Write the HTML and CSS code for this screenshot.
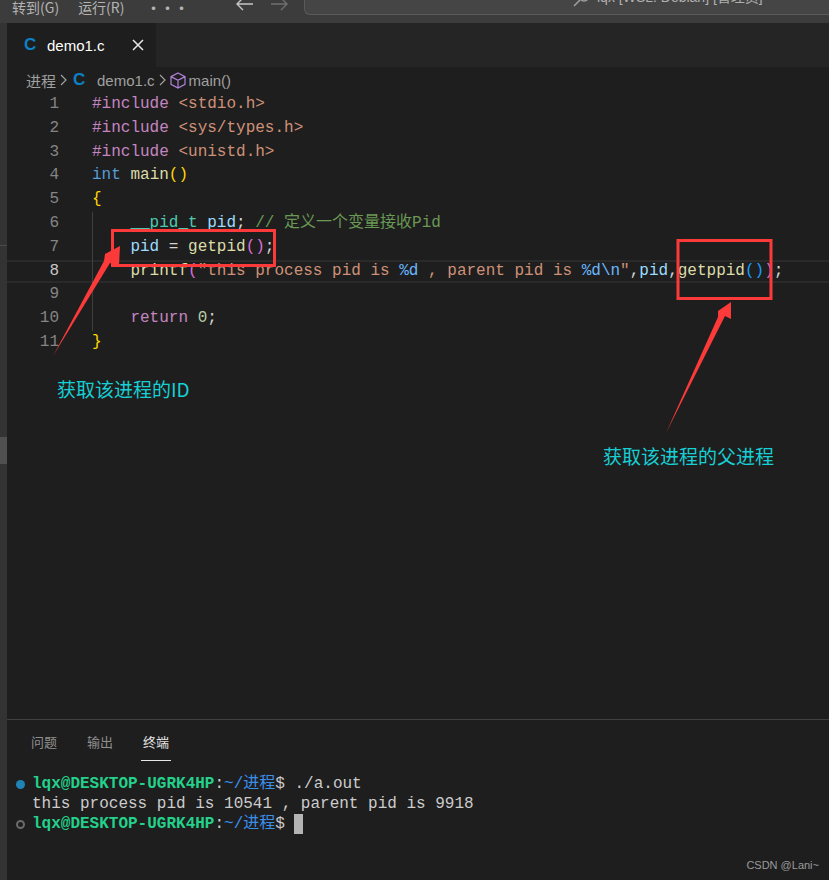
FILE: index.html
```html
<!DOCTYPE html>
<html lang="zh-CN">
<head>
    <meta charset="UTF-8">
    <title>demo1.c - 进程</title>
    <link rel="stylesheet" href="styles.css">
</head>
<body>
    <div class="window">
        <div class="titlebar">
            <div class="menu">
                <span>转到(G)</span>
                <span>运行(R)</span>
                <span class="more">···</span>
            </div>
            <div class="nav-arrows">
                <svg width="18" height="12" viewBox="0 0 18 12"><path d="M17 4H2M7 -2L1 4l6 6" fill="none" stroke="#c5c5c5" stroke-width="1.4"/></svg>
                <svg width="18" height="12" viewBox="0 0 18 12"><path d="M1 4h15M11 -2l6 6-6 6" fill="none" stroke="#6f6f6f" stroke-width="1.4"/></svg>
            </div>
            <div class="command-center">
                <svg width="20" height="12" viewBox="0 0 20 12"><path d="M1 11l6-6" stroke="#a0a0a0" stroke-width="1.5"/><circle cx="11" cy="1" r="5" fill="none" stroke="#a0a0a0" stroke-width="1.4"/></svg>
                <span>lqx [WSL: Debian] [管理员]</span>
            </div>
        </div>

        <div class="workbench">
            <div class="activity-strip">
                <div class="strip-mark"></div>
                <div class="strip-active"></div>
            </div>
            <div class="main">
                <div class="tabs">
                    <div class="tab">
                        <span class="c-icon">C</span>
                        <span class="tab-name">demo1.c</span>
                        <svg class="tab-close" width="12" height="12" viewBox="0 0 12 12"><path d="M1 1l10 10M11 1L1 11" stroke="#e8e8e8" stroke-width="1.5"/></svg>
                    </div>
                </div>

                <div class="breadcrumb">
                    <span>进程</span>
                    <svg width="8" height="12" viewBox="0 0 8 12"><path d="M1 1l5 5-5 5" fill="none" stroke="#a0a0a0" stroke-width="1.2"/></svg>
                    <span class="c-icon small">C</span>
                    <span class="crumb-file">demo1.c</span>
                    <svg width="8" height="12" viewBox="0 0 8 12"><path d="M1 1l5 5-5 5" fill="none" stroke="#a0a0a0" stroke-width="1.2"/></svg>
                    <svg class="cube" width="16" height="17" viewBox="0 0 16 17"><path d="M8 1l7 3.6v7.8L8 16l-7-3.6V4.6zM1 4.6l7 3.7 7-3.7M8 8.3V16" fill="none" stroke="#b180d7" stroke-width="1.2"/></svg>
                    <span class="crumb-file">main()</span>
                </div>

                <div class="editor">
                    <div class="line"><span class="num">1</span><span class="code"><span class="pre">#include</span> <span class="str">&lt;stdio.h&gt;</span></span></div>
                    <div class="line"><span class="num">2</span><span class="code"><span class="pre">#include</span> <span class="str">&lt;sys/types.h&gt;</span></span></div>
                    <div class="line"><span class="num">3</span><span class="code"><span class="pre">#include</span> <span class="str">&lt;unistd.h&gt;</span></span></div>
                    <div class="line"><span class="num">4</span><span class="code"><span class="kw">int</span> <span class="fn">main</span><span class="br1">()</span></span></div>
                    <div class="line"><span class="num">5</span><span class="code"><span class="br1">{</span></span></div>
                    <div class="line"><span class="num">6</span><span class="code guide">    <span class="ty">__pid_t</span> <span class="var">pid</span>; <span class="com">// 定义一个变量接收Pid</span></span></div>
                    <div class="line"><span class="num">7</span><span class="code guide">    <span class="var">pid</span> = <span class="fn">getpid</span><span class="br2">()</span>;</span></div>
                    <div class="line current"><span class="num">8</span><span class="code guide">    <span class="fn">printf</span><span class="br2">(</span><span class="str">"this process pid is </span><span class="esc">%d</span><span class="str"> , parent pid is </span><span class="esc">%d\n</span><span class="str">"</span>,<span class="var">pid</span>,<span class="fn">getppid</span><span class="br3">()</span><span class="br2">)</span>;</span></div>
                    <div class="line"><span class="num">9</span><span class="code guide"> </span></div>
                    <div class="line"><span class="num">10</span><span class="code guide">    <span class="pre">return</span> <span class="lit">0</span>;</span></div>
                    <div class="line"><span class="num">11</span><span class="code"><span class="br1">}</span></span></div>
                </div>

                <div class="panel">
                    <div class="panel-tabs">
                        <span>问题</span>
                        <span>输出</span>
                        <span class="panel-active">终端</span>
                    </div>
                    <div class="terminal">
                        <div class="term-line"><i class="dot dot-blue"></i><span class="user">lqx@DESKTOP-UGRK4HP</span>:<span class="path">~/进程</span>$ ./a.out</div>
                        <div class="term-line">this process pid is 10541 , parent pid is 9918</div>
                        <div class="term-line"><i class="dot dot-empty"></i><span class="user">lqx@DESKTOP-UGRK4HP</span>:<span class="path">~/进程</span>$ <i class="cursor"></i></div>
                    </div>
                </div>
            </div>
        </div>

        <!-- hand drawn marks on top of the screenshot -->
        <svg class="marks" width="829" height="880" viewBox="0 0 829 880">
            <rect x="112.5" y="230.5" width="162" height="35" fill="none" stroke="#fc3a3a" stroke-width="3"/>
            <rect x="678" y="240.5" width="93" height="58" fill="none" stroke="#fc3a3a" stroke-width="3"/>
            <path d="M53 356L104 261 105 254 120 246 119 266 110 263z" fill="#fc3a3a"/>
            <path d="M666 433L718 317 718 311 731 302 731 319 725 316z" fill="#fc3a3a"/>
        </svg>
        <div class="note note-left">获取该进程的ID</div>
        <div class="note note-right">获取该进程的父进程</div>
        <div class="watermark">CSDN @Lani~</div>
    </div>
</body>
</html>
```

FILE: styles.css
```css
* {
    margin: 0;
    padding: 0;
    box-sizing: border-box;
}

body {
    background: #1e1e1e;
    font-family: "Noto Sans CJK SC", "Liberation Sans", sans-serif;
    overflow: hidden;
}

.window {
    position: relative;
    width: 829px;
    height: 880px;
    display: flex;
    flex-direction: column;
    overflow: hidden;
}

/* title bar, cut off by the top of the picture */
.titlebar {
    flex: 0 0 23px;
    background: #3c3c3c;
    display: flex;
    align-items: flex-end;
    overflow: hidden;
    color: #b4b4b4;
    font-size: 14px;
    line-height: 20px;
}

.menu {
    display: flex;
    gap: 19px;
    padding-left: 12px;
    width: 236px;
    margin-bottom: 6px;
}

.more {
    margin-left: 3px;
    font-weight: bold;
}

.nav-arrows {
    display: flex;
    gap: 16px;
    width: 68px;
    height: 12px;
    margin-bottom: 11px;
}

.command-center {
    width: 525px;
    height: 39px;
    margin-bottom: 8px;
    background: #454545;
    border: 1px solid #5a5a5a;
    border-right: none;
    border-radius: 0 0 0 6px;
    display: flex;
    align-items: flex-end;
    padding: 0 0 7px 268px;
    gap: 4px;
    font-family: "Liberation Sans", "Noto Sans CJK SC", sans-serif;
    font-size: 14px;
    color: #b0b0b0;
}

.workbench {
    flex: 1;
    display: flex;
    min-height: 0;
}

.activity-strip {
    flex: 0 0 7px;
    background: #333333;
    position: relative;
}

.strip-mark {
    position: absolute;
    top: 222px;
    left: 0;
    width: 7px;
    height: 1px;
    background: #4a4a4a;
}

.strip-active {
    position: absolute;
    top: 414px;
    left: 0;
    width: 7px;
    height: 27px;
    background: #505050;
}

.main {
    flex: 1;
    display: flex;
    flex-direction: column;
    min-width: 0;
}

.tabs {
    flex: 0 0 44px;
    background: #252526;
    display: flex;
}

.tab {
    width: 149px;
    background: #1e1e1e;
    display: flex;
    align-items: center;
    padding-left: 17px;
    color: #ffffff;
    font-family: "Liberation Sans", sans-serif;
    font-size: 15px;
}

.c-icon {
    color: #0c81c5;
    font-family: "Liberation Sans", sans-serif;
    font-weight: bold;
    font-size: 17px;
    width: 23px;
}

.c-icon.small {
    width: 24px;
    margin-left: 5px;
}

.tab-name {
    width: 85px;
}

.breadcrumb {
    flex: 0 0 26px;
    display: flex;
    align-items: center;
    padding-left: 19px;
    color: #a0a0a0;
    font-family: "Liberation Sans", "Noto Sans CJK SC", sans-serif;
    font-size: 15px;
}

.breadcrumb svg {
    margin-left: 4px;
}

.crumb-file {
    margin-left: 0;
}

.cube {
    margin-right: 3px;
    margin-left: 3px !important;
}

.editor {
    flex: 0 0 626px;
    font-family: "Liberation Mono", "Noto Sans CJK SC", monospace;
    font-size: 16px;
    color: #d4d4d4;
    padding-top: 0;
}

.line {
    display: flex;
    height: 23.8px;
    line-height: 23.8px;
    white-space: pre;
}

.line.current {
    box-shadow: inset 0 2px 0 #2a2a2a, inset 0 -2px 0 #2a2a2a;
}

.num {
    flex: 0 0 52px;
    text-align: right;
    color: #858585;
}

.current .num {
    color: #c6c6c6;
}

.code {
    margin-left: 33px;
    flex: 1;
}

.guide {
    background: linear-gradient(#404040, #404040) 0 0 / 1px 100% no-repeat;
}

.pre { color: #c586c0; }
.str { color: #ce9178; }
.kw { color: #569cd6; }
.fn { color: #dcdcaa; }
.ty { color: #4ec9b0; }
.var { color: #9cdcfe; }
.com { color: #6a9955; }
.esc { color: #6ab7ff; }
.lit { color: #b5cea8; }
.br1 { color: #ffd700; }
.br2 { color: #da70d6; }
.br3 { color: #179fff; }

.panel {
    flex: 1;
    border-top: 1px solid #404040;
    display: flex;
    flex-direction: column;
}

.panel-tabs {
    display: flex;
    gap: 30px;
    padding: 12px 0 0 24px;
    height: 48px;
    font-size: 13px;
    line-height: 20px;
    color: #8f8f8f;
}

.panel-active {
    color: #e7e7e7;
    height: 26px;
    position: relative;
}

.panel-active::after {
    content: "";
    position: absolute;
    left: -2px;
    right: -2px;
    bottom: -3px;
    height: 1px;
    background: #e7e7e7;
}

.terminal {
    padding: 6px 0 0 25px;
    font-family: "Liberation Mono", "Noto Sans CJK SC", monospace;
    font-size: 16px;
    line-height: 20px;
    color: #cccccc;
}

.term-line {
    position: relative;
    height: 20px;
    white-space: pre;
}

.user {
    color: #23d18b;
    font-weight: bold;
}

.path {
    color: #3b8eea;
}

.dot {
    position: absolute;
    left: -16px;
    top: 6px;
    width: 9px;
    height: 9px;
    border-radius: 50%;
}

.dot-blue {
    background: #1f84b5;
}

.dot-empty {
    border: 2px solid #6b6b6b;
}

.cursor {
    display: inline-block;
    width: 9px;
    height: 20px;
    background: #b4b4b4;
    vertical-align: top;
}

.marks {
    position: absolute;
    left: 0;
    top: 0;
    pointer-events: none;
}

.note {
    position: absolute;
    color: #17cfd4;
    font-size: 19px;
    line-height: 26px;
}

.note-left {
    left: 57px;
    top: 376px;
}

.note-right {
    left: 603px;
    top: 443px;
}

.watermark {
    position: absolute;
    right: 10px;
    top: 858px;
    color: #9a9a9a;
    font-family: "Liberation Sans", sans-serif;
    font-size: 11px;
    line-height: 14px;
}
```
